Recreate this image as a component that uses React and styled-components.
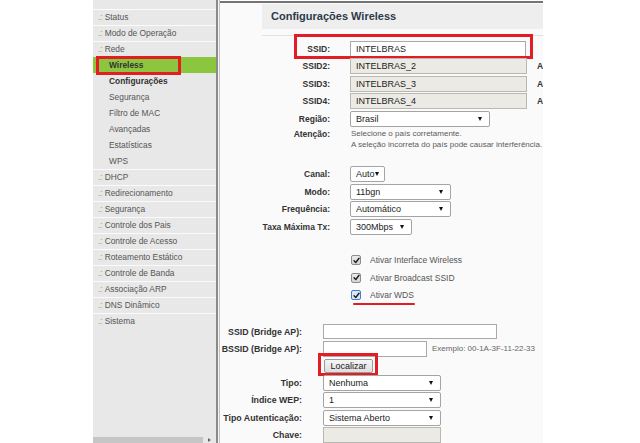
import React from 'react'
import styled, { createGlobalStyle } from 'styled-components'

const RED = '#e21d24'

const GlobalStyle = createGlobalStyle`
  html, body { margin: 0; padding: 0; background: #fff; }
  body { font-family: "Liberation Sans", Arial, sans-serif; overflow: hidden; }
`

const Page = styled.div`
  display: flex;
  width: 640px;
  height: 443px;
  overflow: hidden;
  background: #fff;
`

const Gutter = styled.div`
  width: 93px;
  flex: none;
`

const Sidebar = styled.nav`
  width: 123px;
  flex: none;
  display: flex;
  flex-direction: column;
  padding-top: 9px;
  box-sizing: border-box;
  background: #e8e8e8;
`

const MenuItem = styled.div`
  position: relative;
  height: 16px;
  box-sizing: border-box;
  border-top: ${p => (p.$main ? '1px solid #fbfbfb' : '0')};
  line-height: ${p => (p.$main ? '15px' : '16px')};
  padding-left: ${p => (p.$sub ? '16px' : '5px')};
  font-size: 8.4px;
  font-weight: ${p => (p.$bold ? 700 : 400)};
  color: ${p => (p.$bold ? '#333' : '#555')};
  background: ${p => (p.$active ? '#8cc63e' : 'transparent')};
  white-space: nowrap;
`

const Dots = styled.span`
  color: #9aa63c;
  margin-right: 2px;
`

const Mark = styled.div`
  position: absolute;
  border: 3px solid ${RED};
  box-sizing: border-box;
  pointer-events: none;
`

const Scrollbar = styled.div`
  margin-top: auto;
  display: flex;
  height: 6px;
`

const ScrollThumb = styled.div`
  flex: 1;
  background: #c6c6c6;
`

const ScrollArrow = styled.div`
  width: 13px;
  display: flex;
  align-items: center;
  justify-content: center;
  &::after {
    content: '';
    border-top: 2px solid transparent;
    border-bottom: 2px solid transparent;
    border-left: 3px solid #666;
  }
`

const Divider = styled.div`
  width: 4px;
  flex: none;
  box-sizing: border-box;
  border-left: 2px solid #8a8a8a;
  border-right: 1px solid #c2c2c2;
  background: #f4f4f4;
`

const Content = styled.main`
  width: 323px;
  flex: none;
  margin-top: 1px;
  border-top: 2px solid #747474;
  background: #fafafa;
  overflow: hidden;
`

const Title = styled.h1`
  margin: 1px 0 0 42px;
  height: 25px;
  line-height: 24px;
  padding-left: 9px;
  background: #eeeeee;
  font-size: 11px;
  font-weight: 700;
  color: #2f3a48;
`

const Rule = styled.div`
  margin: 6px 0 0 42px;
  height: 1px;
  background: #e1e1e1;
`

const Section = styled.div`
  margin-top: ${p => p.$top || 0}px;
`

const Row = styled.div`
  position: relative;
  display: grid;
  grid-template-columns: ${p => (p.$lower ? '82px' : '110px')} 1fr;
  column-gap: ${p => (p.$lower ? '21px' : '20px')};
  align-items: ${p => (p.$top ? 'start' : 'center')};
  height: ${p => (p.$h ? `${p.$h}px` : p.$lower ? '17.2px' : '17.5px')};
`

const Label = styled.div`
  text-align: right;
  font-size: ${p => (p.$lower ? '8.8px' : '8.5px')};
  font-weight: 700;
  color: #333;
  white-space: nowrap;
  padding-top: ${p => (p.$pad ? `${p.$pad}px` : 0)};
`

const Field = styled.div`
  position: relative;
  height: 100%;
  display: flex;
  align-items: center;
  white-space: nowrap;
`

const TextBox = styled.input`
  width: ${p => p.$w}px;
  height: ${p => p.$h || 16}px;
  box-sizing: border-box;
  margin: 0;
  padding: 0 5px;
  border: 1px solid ${p => (p.$off ? '#b9b8b1' : '#a9a9a9')};
  background: ${p => (p.$off ? '#ebeae4' : '#fff')};
  font-family: "Liberation Sans", Arial, sans-serif;
  font-size: 9px;
  color: #222;
  outline: none;
  flex: none;
`

const Select = styled.div`
  width: ${p => p.$w}px;
  height: 16px;
  box-sizing: border-box;
  display: flex;
  align-items: center;
  justify-content: space-between;
  padding: 0 7px 0 5px;
  border: 1px solid #a4a4a4;
  border-radius: 2px;
  background: #fff;
  font-size: 9px;
  color: #222;
  flex: none;
`

const Caret = styled.span`
  width: 0;
  height: 0;
  border-left: 2.5px solid transparent;
  border-right: 2.5px solid transparent;
  border-top: 4px solid #111;
`

const Side = styled.span`
  margin-left: 10px;
  font-size: 8.5px;
  font-weight: 700;
  color: #333;
`

const Note = styled.div`
  font-size: 8px;
  line-height: 11px;
  color: #5a5a5a;
  padding-left: 1px;
  white-space: nowrap;
`

const Hint = styled.span`
  margin-left: 5px;
  font-size: 8px;
  color: #666;
`

const Check = styled.span`
  width: 10px;
  height: 10px;
  margin-left: 1px;
  box-sizing: border-box;
  display: inline-flex;
  align-items: center;
  justify-content: center;
  border: 1px solid ${p => (p.$focus ? '#3d7fd3' : '#8d8d8d')};
  border-radius: 2px;
  background: ${p => (p.$focus ? '#dce7f5' : 'linear-gradient(#ececec, #d3d3d3)')};
  flex: none;
`

const CheckText = styled.span`
  margin-left: 9px;
  font-size: 8.5px;
  color: #555;
`

const Underline = styled.div`
  position: absolute;
  left: 3px;
  bottom: -1px;
  width: 62px;
  height: 2.5px;
  background: ${RED};
  border-radius: 1px;
`

const Button = styled.button`
  margin: 0 0 0 1px;
  width: 49px;
  height: 14px;
  padding: 0;
  border: 1px solid #9a9a9a;
  border-radius: 2px;
  background: linear-gradient(#f6f6f6, #dedede);
  font-family: "Liberation Sans", Arial, sans-serif;
  font-size: 9px;
  color: #222;
`

const menu = [
  { text: 'Status', main: true },
  { text: 'Modo de Operação', main: true },
  { text: 'Rede', main: true },
  { text: 'Wireless', sub: true, active: true, bold: true },
  { text: 'Configurações', sub: true, bold: true },
  { text: 'Segurança', sub: true },
  { text: 'Filtro de MAC', sub: true },
  { text: 'Avançadas', sub: true },
  { text: 'Estatísticas', sub: true },
  { text: 'WPS', sub: true },
  { text: 'DHCP', main: true },
  { text: 'Redirecionamento', main: true },
  { text: 'Segurança', main: true },
  { text: 'Controle dos Pais', main: true },
  { text: 'Controle de Acesso', main: true },
  { text: 'Roteamento Estático', main: true },
  { text: 'Controle de Banda', main: true },
  { text: 'Associação ARP', main: true },
  { text: 'DNS Dinâmico', main: true },
  { text: 'Sistema', main: true },
]

const Tick = () => (
  <svg width="7" height="7" viewBox="0 0 8 8">
    <path d="M1.2 4.3 L3.2 6.3 L6.9 1.4" fill="none" stroke="#1f1f1f" strokeWidth="1.6" strokeLinecap="round" strokeLinejoin="round" />
  </svg>
)

const Dropdown = ({ w, children }) => (
  <Select $w={w}>
    <span>{children}</span>
    <Caret />
  </Select>
)

export default function App() {
  return (
    <Page>
      <GlobalStyle />
      <Gutter />
      <Sidebar>
        {menu.map((m, i) => (
          <MenuItem key={i} $main={m.main} $sub={m.sub} $active={m.active} $bold={m.bold}>
            {m.main && <Dots>.:</Dots>}
            {m.text}
            {m.active && <Mark style={{ left: 3, top: -1, width: 85, height: 19 }} />}
          </MenuItem>
        ))}
        <Scrollbar>
          <ScrollThumb />
          <ScrollArrow />
        </Scrollbar>
      </Sidebar>
      <Divider />
      <Content>
        <Title>Configurações Wireless</Title>
        <Rule />
        <Section $top={4}>
          <Row>
            <Label>SSID:</Label>
            <Field><TextBox $w={176} defaultValue="INTELBRAS" readOnly /></Field>
            <Mark style={{ left: 74, top: -6, width: 239, height: 25 }} />
          </Row>
          <Row>
            <Label>SSID2:</Label>
            <Field><TextBox $w={177} $off defaultValue="INTELBRAS_2" readOnly /><Side>A</Side></Field>
          </Row>
          <Row>
            <Label>SSID3:</Label>
            <Field><TextBox $w={177} $off defaultValue="INTELBRAS_3" readOnly /><Side>A</Side></Field>
          </Row>
          <Row>
            <Label>SSID4:</Label>
            <Field><TextBox $w={177} $off defaultValue="INTELBRAS_4" readOnly /><Side>A</Side></Field>
          </Row>
          <Row>
            <Label>Região:</Label>
            <Field><Dropdown w={140}>Brasil</Dropdown></Field>
          </Row>
          <Row $top $h={22}>
            <Label $pad={1}>Atenção:</Label>
            <div>
              <Note>Selecione o país corretamente.</Note>
              <Note>A seleção incorreta do país pode causar interferência.</Note>
            </div>
          </Row>
        </Section>

        <Section $top={16}>
          <Row>
            <Label>Canal:</Label>
            <Field><Dropdown w={35}>Auto</Dropdown></Field>
          </Row>
          <Row>
            <Label>Modo:</Label>
            <Field><Dropdown w={101}>11bgn</Dropdown></Field>
          </Row>
          <Row>
            <Label>Frequência:</Label>
            <Field><Dropdown w={101}>Automático</Dropdown></Field>
          </Row>
          <Row>
            <Label>Taxa Máxima Tx:</Label>
            <Field><Dropdown w={62}>300Mbps</Dropdown></Field>
          </Row>
        </Section>

        <Section $top={16}>
          <Row>
            <span />
            <Field><Check><Tick /></Check><CheckText>Ativar Interface Wireless</CheckText></Field>
          </Row>
          <Row>
            <span />
            <Field><Check><Tick /></Check><CheckText>Ativar Broadcast SSID</CheckText></Field>
          </Row>
          <Row>
            <span />
            <Field>
              <Check $focus><Tick /></Check><CheckText>Ativar WDS</CheckText>
              <Underline />
            </Field>
          </Row>
        </Section>

        <Section $top={19}>
          <Row $lower>
            <Label $lower>SSID (Bridge AP):</Label>
            <Field><TextBox $w={174} $h={15} readOnly /></Field>
          </Row>
          <Row $lower>
            <Label $lower>BSSID (Bridge AP):</Label>
            <Field><TextBox $w={104} readOnly /><Hint>Exemplo: 00-1A-3F-11-22-33</Hint></Field>
          </Row>
          <Row $lower>
            <span />
            <Field><Button>Localizar</Button></Field>
            <Mark style={{ left: 98, top: -4, width: 60, height: 23 }} />
          </Row>
          <Row $lower>
            <Label $lower>Tipo:</Label>
            <Field><Dropdown w={118}>Nenhuma</Dropdown></Field>
          </Row>
          <Row $lower>
            <Label $lower>Índice WEP:</Label>
            <Field><Dropdown w={118}>1</Dropdown></Field>
          </Row>
          <Row $lower>
            <Label $lower>Tipo Autenticação:</Label>
            <Field><Dropdown w={118}>Sistema Aberto</Dropdown></Field>
          </Row>
          <Row $lower>
            <Label $lower>Chave:</Label>
            <Field><TextBox $w={118} $off readOnly /></Field>
          </Row>
        </Section>
      </Content>
    </Page>
  )
}
